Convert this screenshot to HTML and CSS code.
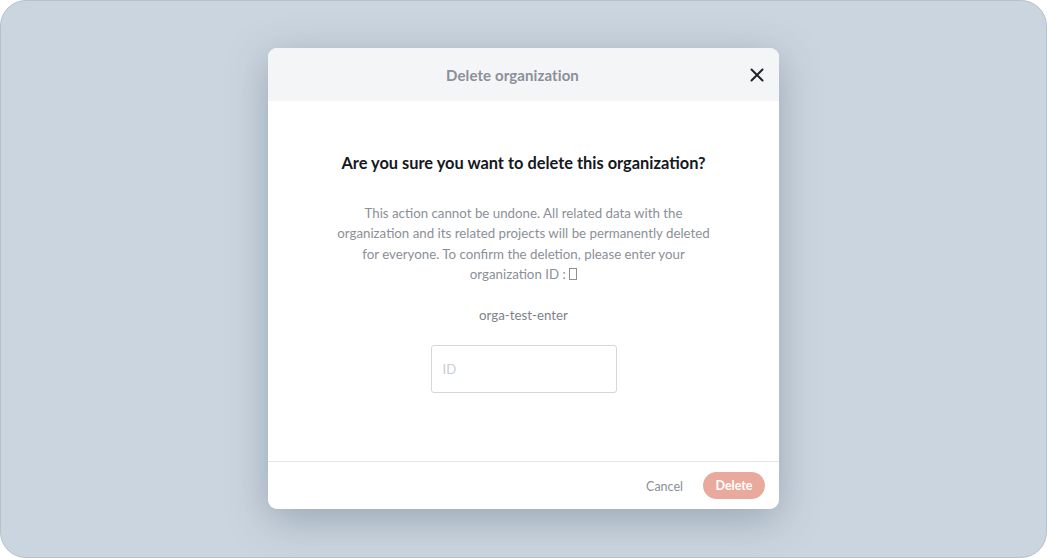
FILE: index.html
```html
<!DOCTYPE html>
<html>
<head>
<meta charset="utf-8">
<link rel="stylesheet" href="styles.css">
</head>
<body>
<div class="frame">
  <div class="modal">
    <div class="modal-header">
      <span class="modal-title">Delete organization</span>
      <button class="close" aria-label="Close">
        <svg width="14" height="14" viewBox="0 0 14 14"><path d="M1.5 1.5 L12.5 12.5 M12.5 1.5 L1.5 12.5" stroke="#1f2329" stroke-width="2" stroke-linecap="round" fill="none"/></svg>
      </button>
    </div>
    <div class="modal-body">
      <h2 class="question">Are you sure you want to delete this organization?</h2>
      <p class="desc">This action cannot be undone. All related data with the organization and its related projects will be permanently deleted for everyone. To confirm the deletion, please enter your organization ID : <span class="box"></span></p>
      <p class="org-id">orga-test-enter</p>
      <input class="id-input" type="text" placeholder="ID">
    </div>
    <div class="modal-footer">
      <button class="btn-cancel">Cancel</button>
      <button class="btn-delete">Delete</button>
    </div>
  </div>
</div>
</body>
</html>
```

FILE: styles.css
```css
html, body {
  margin: 0;
  padding: 0;
  background: #ffffff;
}
body {
  font-family: "Lato", "Nunito Sans", "Noto Sans", sans-serif;
}
.frame {
  box-sizing: border-box;
  width: 1047px;
  height: 558px;
  background: #cbd5df;
  border: 1px solid #b7c1cb;
  border-radius: 26px;
  display: flex;
  justify-content: center;
  padding-top: 47px;
}
.modal {
  width: 511px;
  height: 461px;
  background: #ffffff;
  border-radius: 9px;
  box-shadow: 0 10px 40px rgba(60, 80, 100, 0.35);
  display: flex;
  flex-direction: column;
  overflow: hidden;
}
.modal-header {
  height: 53px;
  flex: none;
  background: #f4f5f7;
  display: flex;
  align-items: center;
  justify-content: center;
  padding-right: 22px;
  position: relative;
}
.modal-title {
  font-size: 15px;
  font-weight: 700;
  color: #8b9098;
  letter-spacing: 0.1px;
}
.close {
  position: absolute;
  right: 15px;
  top: 20px;
  width: 14px;
  height: 14px;
  padding: 0;
  border: 0;
  background: none;
  display: block;
}
.close svg { display: block; }
.modal-body {
  flex: 1;
  display: flex;
  flex-direction: column;
  align-items: center;
  padding-top: 50px;
}
.question {
  margin: 0;
  font-size: 16.4px;
  font-weight: 700;
  color: #15181d;
  line-height: 24px;
}
.desc {
  margin: 28px 0 0;
  width: 380px;
  text-align: center;
  font-size: 13.3px;
  line-height: 20.4px;
  color: #8b9098;
}
.box {
  display: inline-block;
  width: 6px;
  height: 10px;
  border: 1px solid #8b9098;
  vertical-align: -1px;
}
.org-id {
  margin: 20px 0 0;
  font-size: 13.3px;
  line-height: 20px;
  color: #7d828a;
}
.id-input {
  margin-top: 20px;
  box-sizing: border-box;
  width: 186px;
  height: 48px;
  border: 1px solid #d3d7dc;
  border-radius: 3px;
  padding: 0 11px;
  font-family: inherit;
  font-size: 13px;
  color: #333;
  outline: none;
}
.id-input::placeholder { color: #c9ccd1; }
.modal-footer {
  height: 47px;
  flex: none;
  border-top: 1px solid #e4e6e9;
  display: flex;
  align-items: center;
  justify-content: flex-end;
  padding-right: 14px;
  gap: 20px;
}
.btn-cancel {
  border: 0;
  background: none;
  padding: 0;
  padding-top: 2px;
  font-family: inherit;
  font-size: 12.5px;
  color: #8b9098;
}
.btn-delete {
  border: 0;
  width: 62px;
  height: 27px;
  border-radius: 14px;
  background: #e9a99d;
  color: #ffffff;
  font-family: inherit;
  font-size: 12.5px;
  font-weight: 700;
}
```
